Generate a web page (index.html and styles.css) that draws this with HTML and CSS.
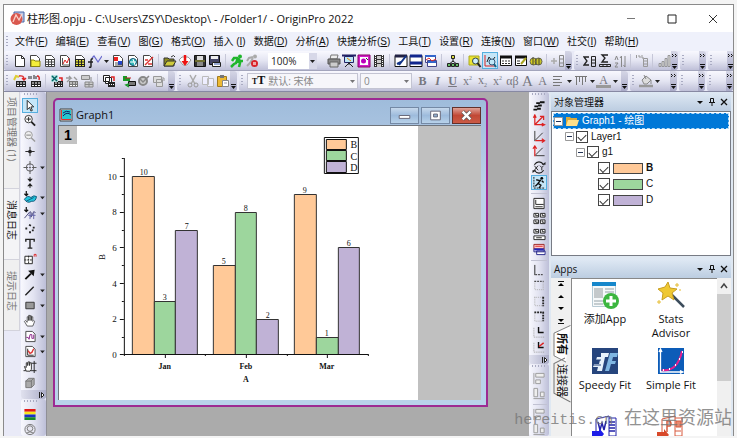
FILE: index.html
```html
<!DOCTYPE html>
<html lang="zh-CN">
<head>
<meta charset="utf-8">
<title>OriginPro 2022</title>
<link rel="stylesheet" href="styles.css">
</head>
<body>
<svg class="sprite" aria-hidden="true">
  <symbol id="doc" viewBox="0 0 14 14"><path d="M2.5 1.5h6l3 3v8h-9z" fill="#fff" stroke="#333"/><path d="M8.5 1.5v3h3" fill="none" stroke="#333"/></symbol>
  <symbol id="folder-doc" viewBox="0 0 14 14"><path d="M2.5 1.5h6l3 3v8h-9z" fill="#fff" stroke="#444"/><path d="M3 6h3l1 1h5v5.500H3z" fill="#f4ee3a" stroke="#8a8410"/></symbol>
  <symbol id="book" viewBox="0 0 14 14"><path d="M2.500 1.500h6l3 3v8h-9z" fill="#fff" stroke="#444"/><path d="M2 5.500h10M2 8h10M2 10.500h10M5.500 5v8M8.500 5v8" stroke="#444"/></symbol>
  <symbol id="graph-doc" viewBox="0 0 14 14"><path d="M2.500 1.500h6l3 3v8h-9z" fill="#fff" stroke="#444"/><path d="M4.500 4v7H11" fill="none" stroke="#555"/><path d="M5 10l2-4 2 3 2-5" fill="none" stroke="#d22"/></symbol>
  <symbol id="matrix" viewBox="0 0 14 14"><path d="M2.500 1.500h6l3 3v8h-9z" fill="#fff" stroke="#444"/><path d="M2 5h10v8H2z" fill="#e5df3c"/><path d="M2 5.500h10M2 8h10M2 10.500h10M2 12.500h10M2.500 5v8M5.500 5v8M8.500 5v8M11.500 5v8" stroke="#222"/></symbol>
  <symbol id="function" viewBox="0 0 14 14"><path d="M5 5Q3 4 3 7v5Q3 14 1 13M0 8h5" fill="none" stroke="#222" stroke-width="1.500"/><path d="M4 4l2-2 4 6 4-6" fill="none" stroke="#66c" stroke-width="1.200"/></symbol>
  <symbol id="layout" viewBox="0 0 14 14"><path d="M2.500 1.500h6l3 3v8h-9z" fill="#fff" stroke="#444"/><path d="M3 3h4v4H3z" fill="#e22"/><path d="M7 7h4v4H7z" fill="#24c"/><path d="M4 9h3M4 11h7" stroke="#555"/></symbol>
  <symbol id="notes" viewBox="0 0 14 14"><path d="M2.500 1.500h6l3 3v8h-9z" fill="#fff" stroke="#444"/><circle cx="7" cy="8" r="3.500" fill="#3bb" stroke="#157"/><path d="M4 8h6M7 5l2 6" stroke="#fff"/></symbol>
  <symbol id="digitize" viewBox="0 0 14 14"><path d="M2.500 1.500h6l3 3v8h-9z" fill="#fff" stroke="#444"/><path d="M4 11l8-8M4 6h3M7 10h4" stroke="#d33" stroke-width="1.400"/></symbol>
  <symbol id="open" viewBox="0 0 14 14"><path d="M1 4h4l1 1h5v7H1z" fill="#8c8a22" stroke="#333"/><path d="M1 12l3-5h9l-3 5z" fill="#cdc93c" stroke="#333"/><path d="M8 3q3-3 4 0" fill="none" stroke="#333"/></symbol>
  <symbol id="template" viewBox="0 0 14 14"><path d="M1 6l3-3h6l3 3-4 5H5z" fill="#fff" stroke="#999"/><path d="M7 1v7" stroke="#e11" stroke-width="2.500"/><path d="M3.500 7h7L7 12z" fill="#e11"/></symbol>
  <symbol id="save" viewBox="0 0 14 14"><path d="M1.500 1.500h11v11h-11z" fill="#333" stroke="#111"/><path d="M4 2h6v4H4z" fill="#ddd"/><path d="M4 8h6v4H4z" fill="#888"/><path d="M2 7h10" stroke="#aa3"/></symbol>
  <symbol id="save-as" viewBox="0 0 14 14"><path d="M1.500 1.500h10v9h-10z" fill="#446" stroke="#111"/><path d="M3 2h7v3H3z" fill="#eee"/><path d="M4.500 8.500h8v4h-8z" fill="#fff" stroke="#222"/><path d="M6 10h6" stroke="#35a"/></symbol>
  <symbol id="run" viewBox="0 0 14 14"><path d="M8 4L4 4 2 7M8 4l-2 5-2 1-3 3M7 7l3 2-1 4M8 4l2 3h3" fill="none" stroke="#1fb62b" stroke-width="2.500"/><circle cx="10" cy="2.500" r="2" fill="#1fb62b"/></symbol>
  <symbol id="run-stop" viewBox="0 0 14 14"><path d="M8 3L4 4 2 7M8 4l-3 5-3 3" fill="none" stroke="#aaa" stroke-width="2"/><circle cx="10" cy="2.500" r="2" fill="#aaa"/><circle cx="9.500" cy="9.500" r="3.500" fill="#d8232a"/><path d="M8 8h3v3H8z" fill="#fff" opacity=".6"/></symbol>
  <symbol id="printer" viewBox="0 0 14 14"><path d="M4 1h7l-1 4H3z" fill="#eee" stroke="#777"/><path d="M1 5h12v5H1z" fill="#888" stroke="#555"/><path d="M3 8h8v5H3z" fill="#ccc" stroke="#666"/></symbol>
  <symbol id="slide" viewBox="0 0 14 14"><path d="M0 1.500h14" stroke="#226" stroke-width="2"/><path d="M2.500 2.500h9v6h-9z" fill="#bce6f4" stroke="#226"/><path d="M7 8v3M7 9l-4 4M7 9l4 4" stroke="#222"/><path d="M5 4l4 3" stroke="#e80"/></symbol>
  <symbol id="camera" viewBox="0 0 14 14"><path d="M1 1h12v12H1z" fill="#d21cc9" stroke="#806"/><path d="M3 3h8v8H3z" fill="#fff"/><circle cx="6.500" cy="7" r="2.500" fill="#b0b"/><path d="M9 4l2 2" stroke="#333"/></symbol>
  <symbol id="film" viewBox="0 0 14 14"><path d="M2 1h10v12H2z" fill="#333"/><path d="M5 2h4v3H5zM5 6h4v3H5zM5 10h4v3H5z" fill="#ccc"/><path d="M3.500 1v12M10.500 1v12" stroke="#fff" stroke-dasharray="1 1"/></symbol>
  <symbol id="edit-window" viewBox="0 0 14 14"><path d="M1 1.500h12v11H1z" fill="#fff" stroke="#111"/><path d="M1 2h12" stroke="#224" stroke-width="3"/><path d="M12 2L5 11M3 10l4-2" stroke="#138" stroke-width="2"/></symbol>
  <symbol id="bars-window" viewBox="0 0 14 14"><path d="M1 1.500h12v11H1z" fill="#fff" stroke="#111"/><path d="M1 2h12M1 9h12" stroke="#11268e" stroke-width="3"/></symbol>
  <symbol id="stack-window" viewBox="0 0 14 14"><path d="M1.500 1.500h10v7h-10zM3.500 6.500h9v6h-9z" fill="#fff" stroke="#448"/><path d="M1 2h11M4 8h8" stroke="#36c" stroke-width="2"/><path d="M2 6l3-2 3 3 4-2" fill="none" stroke="#d33"/></symbol>
  <symbol id="tree" viewBox="0 0 14 14"><path d="M7 3v5M7 7L2 11M7 7l5 4" stroke="#222"/><path d="M5.500 1.500h3v3h-3z" fill="#dd4" stroke="#222"/><path d="M1.500 9.500h3v3h-3zM5.500 9.500h3v3h-3zM9.500 9.500h3v3h-3z" fill="#6b6" stroke="#222"/></symbol>
  <symbol id="explorer" viewBox="0 0 14 14"><path d="M1 2h10v9H1z" fill="#ebe332" stroke="#aa2"/><circle cx="7.500" cy="7" r="3" fill="#cef" stroke="#344"/><path d="M9.500 9l3 4" stroke="#222" stroke-width="2"/></symbol>
  <symbol id="peek" viewBox="0 0 14 14"><path d="M2 1v11h11" fill="none" stroke="#d22"/><path d="M4 8l2-5 3 4 3-4" fill="none" stroke="#222"/><circle cx="9" cy="8" r="3" fill="#bee8f8" stroke="#357"/><path d="M11 10l2 3" stroke="#168" stroke-width="2"/></symbol>
  <symbol id="table" viewBox="0 0 14 14"><path d="M1.500 2.500h11v9h-11z" fill="#fff" stroke="#111"/><path d="M1 3h12" stroke="#111" stroke-width="3"/><path d="M3 7h8M3 9.500h8" stroke="#333" stroke-dasharray="2 1"/></symbol>
  <symbol id="table-edit" viewBox="0 0 14 14"><path d="M1.500 2.500h11v9h-11z" fill="#fff" stroke="#111"/><path d="M1 3h12" stroke="#111" stroke-width="3"/><path d="M3 7h3M3 9.500h3" stroke="#333"/><path d="M12 4L7 10" stroke="#aaa520" stroke-width="2"/></symbol>
  <symbol id="globes" viewBox="0 0 14 14"><circle cx="4.500" cy="7.500" r="3.500" fill="#d8d020" stroke="#665"/><circle cx="9.500" cy="7.500" r="3.500" fill="#c6c227" stroke="#665"/><path d="M4 3v8M7 5v6M10 4v7" stroke="#443"/></symbol>
  <symbol id="add-col" viewBox="0 0 14 14"><path d="M0 7h6M3 4v6" stroke="#aaa" stroke-width="1.500"/><path d="M8.500 1.500h4v11h-4zM8 5h5M8 9h5" fill="none" stroke="#888"/></symbol>
  <symbol id="sum-col" viewBox="0 0 14 14"><path d="M6 3H1l3 4-3 4h5" fill="none" stroke="#222" stroke-width="1.300"/><path d="M8.500 2.500h4v10h-4zM8 6h5M8 9h5" fill="none" stroke="#222"/></symbol>
  <symbol id="sum-row" viewBox="0 0 14 14"><path d="M10 1H4l3 3-3 4h6" fill="none" stroke="#222" stroke-width="1.300"/><path d="M1.500 10.500h11v2h-11zM5 10v3M9 10v3" fill="none" stroke="#222"/></symbol>
  <symbol id="sort" viewBox="0 0 14 14"><path d="M2 6l1.500-4L5 6M2 9h3l-3 4h3M8.500 13V2M7 4l1.500-2M12 2v11M10.500 11L12 13" fill="none" stroke="#888"/></symbol>
  <symbol id="digits" viewBox="0 0 14 14"><path d="M1.500 1v3M3 2h2v2M7 1v3h2" fill="none" stroke="#999"/><path d="M8.500 4.500h4v8h-4zM8 7h5M8 10h5" fill="none" stroke="#999"/></symbol>
  <symbol id="columns" viewBox="0 0 14 14"><path d="M2 9.500h2v3H2zM5 7.500h2v5H5zM8 4.500h2v8H8zM11 1.500h2v11h-2z" fill="#ddd" stroke="#888" stroke-width=".8"/></symbol>
  <symbol id="import" viewBox="0 0 14 14"><path d="M3 7h10v6H3z" fill="#222"/><path d="M4 9h8M4 11.500h8" stroke="#fff" stroke-dasharray="2 1"/><path d="M1 6l2-4 3 1" fill="none" stroke="#dc3" stroke-width="2"/><path d="M6 2q5-1 5 3M9 4l2 2 2-2" fill="none" stroke="#d22" stroke-width="1.300"/></symbol>
  <symbol id="import-many" viewBox="0 0 14 14"><path d="M3 7h10v6H3z" fill="#222"/><path d="M4 9h8M4 11.500h8" stroke="#fff" stroke-dasharray="2 1"/><path d="M1 2v3M3 2v3M6 1v4M8 2v3" stroke="#222"/><path d="M9 2q3 0 2 4" fill="none" stroke="#d22" stroke-width="1.500"/></symbol>
  <symbol id="excel-import" viewBox="0 0 14 14"><path d="M4 7h9v6H4z" fill="#222"/><path d="M5 9h7M5 11.500h7" stroke="#fff" stroke-dasharray="2 1"/><path d="M1 1h7v7H1z" fill="#b7e0e0"/><path d="M2 2l5 5M7 2L2 7" stroke="#066" stroke-width="1.500"/><path d="M9 4h3v3" fill="none" stroke="#d22" stroke-width="1.500"/></symbol>
  <symbol id="reimport" viewBox="0 0 14 14"><path d="M4 7h9v6H4z" fill="#777"/><path d="M5 9h7M5 11.500h7" stroke="#fff" stroke-dasharray="2 1"/><path d="M1 4h5l-2-2M9 3l3 3M6 4l-4 4" fill="none" stroke="#999" stroke-width="1.300"/></symbol>
  <symbol id="link-table" viewBox="0 0 14 14"><path d="M1.500 1.500h8v4h-8zM5 8h8v5H5z" fill="#ccc" stroke="#888"/><path d="M5 10.500h8M9 8v5M11 3v4" stroke="#888"/></symbol>
  <symbol id="duplicate" viewBox="0 0 14 14"><path d="M1.500 1.500h6v6h-6zM3.500 3.500h6v6h-6z" fill="#fff" stroke="#222"/><path d="M6 8h7v5H6z" fill="#222"/><path d="M7 10.500h6" stroke="#fff" stroke-dasharray="1 1"/><path d="M9 3h3v4" fill="none" stroke="#d22" stroke-width="1.500"/></symbol>
  <symbol id="connect" viewBox="0 0 14 14"><path d="M1 2h4v2h3v3H1z" fill="#179c27"/><path d="M6.500 7.500h7v4h-7z" fill="#777" stroke="#111"/><path d="M7 10l-3 1 3 2" fill="none" stroke="#179c27" stroke-width="1.500"/><path d="M3 4h6" stroke="#b22"/></symbol>
  <symbol id="filter-off" viewBox="0 0 14 14"><circle cx="6" cy="7" r="4" fill="#ccc" stroke="#888" stroke-width="2"/><path d="M3 5l3 3 6-6" fill="none" stroke="#888" stroke-width="1.500"/></symbol>
  <symbol id="pages-off" viewBox="0 0 14 14"><path d="M1.500 2.500h8v6h-8zM4.500 5.500h6v7h-6z" fill="#ddd" stroke="#999"/><path d="M9 4h3v3" fill="none" stroke="#999"/></symbol>
  <symbol id="cut" viewBox="0 0 14 14"><path d="M4 1l5 9M10 1L5 10" stroke="#aaa" stroke-width="1.500"/><circle cx="4" cy="11" r="2" fill="none" stroke="#999"/><circle cx="10" cy="11" r="2" fill="none" stroke="#999"/></symbol>
  <symbol id="copy" viewBox="0 0 14 14"><path d="M1.500 2.500h6v8h-6zM6.500 4.500h6v8h-6z" fill="#eef" stroke="#bbb"/></symbol>
  <symbol id="paste" viewBox="0 0 14 14"><path d="M1.500 2.500h9v10h-9z" fill="#edb932" stroke="#a07a20"/><path d="M4 1h4v3H4z" fill="#777"/><path d="M6.500 6.500h6v6h-6z" fill="#fff" stroke="#888"/><path d="M8 9h3" stroke="#999"/></symbol>
  <symbol id="lines" viewBox="0 0 14 14"><path d="M2 2.500h9M2 5.500h7M2 8.500h9M2 11.500h7" stroke="#777"/></symbol>
  <symbol id="verticals" viewBox="0 0 14 14"><path d="M2.500 2v9M5.500 2v6M8.500 2v9M11.500 2v6M1 2.500h12" stroke="#777"/></symbol>
  <symbol id="bucket" viewBox="0 0 14 14"><path d="M3 6l4-4 5 4-4 4H5z" fill="#ddd" stroke="#888"/><path d="M5 1l2 4M12 6v4" stroke="#888"/><path d="M0 12h14" stroke="#999" stroke-width="2.500"/></symbol>
  <symbol id="drop" viewBox="0 0 8 14"><path d="M2 6h5L4.500 9z" fill="#222"/></symbol>
  <symbol id="more" viewBox="0 0 7 18"><path d="M1 12.500h5" stroke="#111"/><path d="M1 14h5l-2.500 3z" fill="#111"/></symbol>
  <symbol id="more-double" viewBox="0 0 7 18"><path d="M1 2l1.500 1.500L1 5M4 2l1.500 1.500L4 5" fill="none" stroke="#111"/><path d="M1 12.500h5" stroke="#111"/><path d="M1 14h5l-2.500 3z" fill="#111"/></symbol>
  <symbol id="pointer" viewBox="0 0 14 14"><path d="M4 1.500v10l2.500-2.500 1.500 4 1.500-.7L8 8.500h3z" fill="#fff" stroke="#222"/></symbol>
  <symbol id="zoom-in" viewBox="0 0 14 14"><circle cx="5.500" cy="5.500" r="4" fill="#fff" stroke="#333"/><path d="M3 5.500h5M5.500 3v5" stroke="#222"/><path d="M8.500 8.500l4 4" stroke="#222" stroke-width="2"/></symbol>
  <symbol id="zoom-out" viewBox="0 0 14 14"><circle cx="5.500" cy="5.500" r="4" fill="#eee" stroke="#999"/><path d="M3 5.500h5M8.500 8.500l4 4" stroke="#999" stroke-width="1.500"/></symbol>
  <symbol id="cross" viewBox="0 0 14 14"><path d="M7 2v10M2 7h10" stroke="#222"/><circle cx="7" cy="7" r="2" fill="#222"/></symbol>
  <symbol id="target" viewBox="0 0 14 14"><circle cx="7" cy="7" r="4" fill="#eef" stroke="#555"/><path d="M7 0v5M7 9v5M0 7h5M9 7h5" stroke="#555"/><circle cx="7" cy="7" r="1" fill="#555"/></symbol>
  <symbol id="updown" viewBox="0 0 14 14"><path d="M7 1v4M7 9v4" stroke="#222"/><path d="M4 3h6L7 6.500zM4 11h6L7 7.500z" fill="#222"/></symbol>
  <symbol id="mask" viewBox="0 0 14 14"><path d="M3 0v5M1 3l2 2 2-2" fill="none" stroke="#111" stroke-width="1.300"/><path d="M1 9q3-5 7-2 3-3 6-1-1 6-5 5-5 3-8-2z" fill="#23c4dd" stroke="#157"/><path d="M3 11l8-4" stroke="#157"/></symbol>
  <symbol id="region" viewBox="0 0 14 14"><path d="M3 0v5M1 3l2 2 2-2" fill="none" stroke="#111" stroke-width="1.300"/><path d="M1 12l6-7q2 0 1 6l3-6 2 1" fill="none" stroke="#447"/><path d="M7 6v7M11 6v7M5 9h8" stroke="#66a"/></symbol>
  <symbol id="points" viewBox="0 0 14 14"><path d="M2 7h2M6 3l2 1M6 11h2M10 6h2M9 9h2" stroke="#222" stroke-width="2"/></symbol>
  <symbol id="text-tool" viewBox="0 0 14 14"><path d="M2 2.500h10M7 2v10M2.500 2v3M11.500 2v3M4.500 12h5" stroke="#222" stroke-width="1.500"/></symbol>
  <symbol id="grid-tool" viewBox="0 0 14 14"><path d="M1.500 3.500h8v8h-8z" fill="#fff" stroke="#222"/><path d="M1 7.500h9M5.500 3v9" stroke="#222" stroke-dasharray="2 1"/><path d="M11.500 4V1.500h2V4" fill="none" stroke="#d22"/></symbol>
  <symbol id="arrow-tool" viewBox="0 0 14 14"><path d="M2 12l6-6" stroke="#111" stroke-width="2"/><path d="M5 3l7-1-1 7z" fill="#111"/></symbol>
  <symbol id="line-tool" viewBox="0 0 14 14"><path d="M2 12L11 3" stroke="#222" stroke-width="1.500"/></symbol>
  <symbol id="rect-tool" viewBox="0 0 14 14"><path d="M2.500 3.500h9v7h-9z" fill="#999" stroke="#333"/></symbol>
  <symbol id="hand" viewBox="0 0 14 14"><path d="M4 13L1 8l1-1 2 2V3h1.500v4V1.500H7V7V2h1.500v5V3H10v5l1-1 1 1-2 5z" fill="#fff" stroke="#333" stroke-width=".8"/></symbol>
  <symbol id="plot-purple" viewBox="0 0 14 14"><path d="M2.500 1.500h7l3 3v8h-10z" fill="#fff" stroke="#444"/><path d="M3 8h2l1 2 1-5h2v4h2V5" fill="none" stroke="#828"/></symbol>
  <symbol id="plot-red" viewBox="0 0 14 14"><path d="M2.500 1.500h7l3 3v8h-10z" fill="#fff" stroke="#444"/><path d="M4.500 4v7H11" stroke="#222" fill="none"/><path d="M5 6l2 3 2-1 2-4" fill="none" stroke="#d33" stroke-width="1.500"/></symbol>
  <symbol id="rescale" viewBox="0 0 14 14"><path d="M0 11.500h14M11.500 1v13M9 3.500h5" stroke="#222"/><path d="M3 12L1 7l2 1V3h1.500v3L5 2h1.500v4L7 3h1.500v7L7 12z" fill="#fff" stroke="#333"/></symbol>
  <symbol id="cube" viewBox="0 0 14 14"><path d="M2.500 5.500l3-3h6v7l-3 3h-6z" fill="#aaa" stroke="#777"/><path d="M2 5.500h6.500v7M8 5.500l3-3" fill="none" stroke="#777"/></symbol>
  <symbol id="palette" viewBox="0 0 14 14"><path d="M1 2.500h12" stroke="#e01818" stroke-width="3"/><path d="M1 5.500h12" stroke="#f6e71c" stroke-width="3"/><path d="M1 8.500h12" stroke="#1b32c4" stroke-width="3"/><path d="M1 11.500h12" stroke="#168a27" stroke-width="3"/></symbol>
  <symbol id="contour" viewBox="0 0 14 14"><circle cx="7" cy="7" r="5.500" fill="#e6e6f0" stroke="#777"/><circle cx="7" cy="6" r="3" fill="none" stroke="#777"/><path d="M3 11q4-3 8 0" fill="none" stroke="#777"/></symbol>
  <symbol id="steps" viewBox="0 0 14 14"><path d="M1 11.500h4M5 10.500h4M2 8h4M6 7h4M4 4.500h4M8 3.500h5" stroke="#111" stroke-width="2"/></symbol>
  <symbol id="axes-all" viewBox="0 0 14 14"><path d="M2.500 12V2M2 11.500h10M3 11L11 3M1 4l1.500-3L4 4M10 10l3 1.500L10 13M8 2.500h4v4" fill="none" stroke="#d22" stroke-width="1.300"/></symbol>
  <symbol id="axes-x" viewBox="0 0 14 14"><path d="M2.500 1v11M3 11l8-8" fill="none" stroke="#333"/><path d="M3 11.500h10M10 9.500l3 2-3 2" fill="none" stroke="#d22" stroke-width="1.300"/></symbol>
  <symbol id="axes-y" viewBox="0 0 14 14"><path d="M3 11.500h10M3 11l8-8" fill="none" stroke="#333"/><path d="M2.500 12V2M.5 4l2-3 2 3" fill="none" stroke="#d22" stroke-width="1.300"/></symbol>
  <symbol id="swap-xy" viewBox="0 0 14 14"><path d="M2 4q2-3 5-3t5 3M12 10q-2 3-5 3T2 10" fill="none" stroke="#222" stroke-width="1.300"/><path d="M2 5l4 5M6 5l-4 5M8 5l2 2 2-2M10 7v3" fill="none" stroke="#222"/><path d="M10 4h4V1zM0 10h4l-4 3z" fill="#222"/></symbol>
  <symbol id="speed-mode" viewBox="0 0 14 14"><path d="M1.500 1v12H13" fill="none" stroke="#111" stroke-dasharray="2 1"/><circle cx="10" cy="2.500" r="1.500"/><path d="M9 4L6 8l3 2-2 3M8 5L4 4M10 5l2 2M6 8L3 11" fill="none" stroke="#111" stroke-width="1.500"/></symbol>
  <symbol id="panel-one" viewBox="0 0 14 14"><path d="M1.500 1.500h11v11h-11z" fill="#fff" stroke="#222"/><path d="M3.500 3v5H12M3 10.500h8" fill="none" stroke="#222"/></symbol>
  <symbol id="panel-four" viewBox="0 0 14 14"><path d="M1.500 1.500h5v4h-5zM8.500 1.500h5v4h-5zM1.500 8.500h5v4h-5zM8.500 8.500h5v4h-5z" fill="#fff" stroke="#222"/><path d="M3.500 2v2H6M10.500 2v2H13M3.500 9v2H6M10.500 9v2H13" fill="none" stroke="#222"/></symbol>
  <symbol id="panel-three" viewBox="0 0 14 14"><path d="M1.500 1.500h5v4h-5zM8.500 1.500h5v4h-5zM1.500 8.500h12v4h-12z" fill="#fff" stroke="#222"/><path d="M3.500 2v2H6M10.500 2v2H13M4 10.500h6" fill="none" stroke="#222"/></symbol>
  <symbol id="merge" viewBox="0 0 14 14"><path d="M1.500 1.500h11v5h-11z" fill="#fcc" stroke="#922"/><path d="M3 3.500h8" stroke="#d22"/><path d="M1.500 6.500h11v3h-11zM4.500 8.500h9v4h-9z" fill="#fff" stroke="#228"/><path d="M2 7h10" stroke="#22b" stroke-width="2"/></symbol>
  <symbol id="axis-bl" viewBox="0 0 14 14"><path d="M2.500 1v11" stroke="#222"/><path d="M3 11.500h9" stroke="#222" stroke-dasharray="2 1"/></symbol>
  <symbol id="axis-tl" viewBox="0 0 14 14"><path d="M2.500 2v10M11.500 3v9M3 11.500h8" stroke="#aaa" stroke-dasharray="1 1"/><path d="M2 2.500h10" stroke="#222" stroke-dasharray="2 1"/></symbol>
  <symbol id="axis-r" viewBox="0 0 14 14"><path d="M2.500 2v10M2 2.500h9M3 11.500h8" stroke="#aaa" stroke-dasharray="1 1"/><path d="M11.500 2v10" stroke="#222" stroke-dasharray="2 1" stroke-width="2"/></symbol>
  <symbol id="axis-box" viewBox="0 0 14 14"><path d="M2 2.500h10M11.500 2v10" stroke="#222" stroke-width="2" stroke-dasharray="2 1"/><path d="M2.500 3v9h9" fill="none" stroke="#aaa" stroke-dasharray="1 1"/></symbol>
  <symbol id="inset" viewBox="0 0 14 14"><path d="M1.500 2v10h11" fill="none" stroke="#999" stroke-dasharray="1 1"/><path d="M6.500 1v6H12" fill="none" stroke="#111" stroke-width="1.500"/></symbol>
  <symbol id="inset-data" viewBox="0 0 14 14"><path d="M1.500 2v10h11" fill="none" stroke="#999" stroke-dasharray="1 1"/><path d="M6.500 1v6H12" fill="none" stroke="#111" stroke-width="1.500"/><path d="M7 6l5-4" stroke="#d22" stroke-width="1.500"/></symbol>
  <symbol id="align" viewBox="0 0 14 14"><path d="M1.500 1v12" stroke="#999"/><path d="M3.500 1.500h9v4h-9zM3.500 8.500h5v4h-5z" fill="#eee" stroke="#999"/></symbol>
  <symbol id="align-bottom" viewBox="0 0 14 14"><path d="M1 12.500h12" stroke="#999"/><path d="M1.500 1.500h4v9h-4zM8.500 5.500h4v5h-4z" fill="#eee" stroke="#999"/></symbol>
  <symbol id="more-side" viewBox="0 0 8 8"><path d="M1.500 1v6" stroke="#222"/><path d="M3.500 1.500v5L6 4z" fill="#fff" stroke="#222"/></symbol>
  <symbol id="menu-arrow" viewBox="0 0 10 10"><path d="M2 4h6L5 7z" fill="#111"/></symbol>
  <symbol id="pin" viewBox="0 0 10 10"><path d="M3.500 1.500h3v4h-3zM2 5.500h6M5 6v3" fill="none" stroke="#111"/></symbol>
  <symbol id="close" viewBox="0 0 10 10"><path d="M2 2l6 6M8 2L2 8" stroke="#111" stroke-width="1.300"/></symbol>
  <symbol id="minus-box" viewBox="0 0 9 9"><path d="M.5 .5h8v8h-8z" fill="#fff" stroke="#999"/><path d="M2 4.500h5" stroke="#235"/></symbol>
</svg>

<main class="window">
  <header class="titlebar">
    <svg class="app-icon" viewBox="0 0 15 15" aria-hidden="true"><path d="M4 1h10v10H4z" fill="#b9c9e8" stroke="#4b67a6"/><circle cx="6.500" cy="8" r="6" fill="#d9584e"/><path d="M3 11l3-7 3 5 3-6" fill="none" stroke="#fbd0c8" stroke-width="1.300"/></svg>
    <h1 class="title">柱形图.opju - C:\Users\ZSY\Desktop\ - /Folder1/ - OriginPro 2022</h1>
    <div class="captions">
      <button aria-label="最小化"><svg viewBox="0 0 12 12"><path d="M2 5.500h8" stroke="#777"/></svg></button>
      <button aria-label="最大化"><svg viewBox="0 0 12 12"><path d="M2 2h8v8H2z" fill="none" stroke="#222"/></svg></button>
      <button aria-label="关闭"><svg viewBox="0 0 12 12"><path d="M2 2l8 8M10 2l-8 8" stroke="#333"/></svg></button>
    </div>
  </header>

  <nav class="menubar">
    <span class="grip"></span>
    <button>文件(<u>F</u>)</button><button>编辑(<u>E</u>)</button><button>查看(<u>V</u>)</button><button>图(<u>G</u>)</button><button>格式(<u>O</u>)</button><button>插入 (<u>I</u>)</button><button>数据(<u>D</u>)</button><button>分析(<u>A</u>)</button><button>快捷分析(<u>S</u>)</button><button>工具(<u>T</u>)</button><button>设置(<u>R</u>)</button><button>连接(<u>N</u>)</button><button>窗口(<u>W</u>)</button><button>社交(<u>I</u>)</button><button>帮助(<u>H</u>)</button>
  </nav>

  <div class="toolrow">
    <div class="strip strip-main">
      <span class="grip"></span>
      <button aria-label="新建项目"><svg><use href="#doc"/></svg></button><button aria-label="新建文件夹"><svg><use href="#folder-doc"/></svg></button><button aria-label="新建工作簿"><svg><use href="#book"/></svg></button><button aria-label="新建图"><svg><use href="#graph-doc"/></svg></button><button aria-label="新建矩阵"><svg><use href="#matrix"/></svg></button><button aria-label="新建函数图"><svg><use href="#function"/></svg></button><button class="drop" aria-label="函数图选项"><svg><use href="#drop"/></svg></button><button aria-label="新建布局"><svg><use href="#layout"/></svg></button><button aria-label="新建备注"><svg><use href="#notes"/></svg></button><button aria-label="数字化"><svg><use href="#digitize"/></svg></button>
      <i class="sep"></i>
      <button aria-label="打开"><svg><use href="#open"/></svg></button><button aria-label="打开模板"><svg><use href="#template"/></svg></button><button aria-label="保存"><svg><use href="#save"/></svg></button><button aria-label="保存模板"><svg><use href="#save-as"/></svg></button>
      <i class="sep"></i>
      <button aria-label="重新计算"><svg><use href="#run"/></svg></button><button aria-label="停止"><svg><use href="#run-stop"/></svg></button>
      <label class="combo zoom"><select aria-label="缩放"><option>100%</option></select><svg class="combo-arrow"><use href="#drop"/></svg></label>
      <button aria-label="打印"><svg><use href="#printer"/></svg></button><button aria-label="放映"><svg><use href="#slide"/></svg></button><button aria-label="截图"><svg><use href="#camera"/></svg></button><button aria-label="视频"><svg><use href="#film"/></svg></button>
      <i class="sep"></i>
      <button aria-label="编辑窗口"><svg><use href="#edit-window"/></svg></button><button aria-label="平铺"><svg><use href="#bars-window"/></svg></button><button aria-label="层叠"><svg><use href="#stack-window"/></svg></button>
      <i class="sep"></i>
      <button aria-label="结构"><svg><use href="#tree"/></svg></button>
      <i class="sep"></i>
      <button aria-label="项目管理器"><svg><use href="#explorer"/></svg></button><button class="on" aria-label="对象管理器"><svg><use href="#peek"/></svg></button><button aria-label="结果日志"><svg><use href="#table"/></svg></button><button aria-label="命令窗口"><svg><use href="#table-edit"/></svg></button><button aria-label="学习中心"><svg><use href="#globes"/></svg></button>
      <i class="sep"></i>
      <button aria-label="添加列"><svg><use href="#add-col"/></svg></button>
      <button class="overflow" aria-label="更多"><svg><use href="#more"/></svg></button>
    </div>
    <div class="strip strip-fill">
      <span class="grip"></span>
      <button aria-label="列统计"><svg><use href="#sum-col"/></svg></button><button aria-label="行统计"><svg><use href="#sum-row"/></svg></button><button aria-label="排序"><svg><use href="#sort"/></svg></button>
      <i class="sep"></i><button aria-label="设置值"><svg><use href="#digits"/></svg></button>
      <i class="sep"></i><button aria-label="柱状图"><svg><use href="#columns"/></svg></button>
      <button class="overflow" aria-label="更多"><svg><use href="#more-double"/></svg></button>
    </div>
    <div class="strip strip-mini"><span class="grip"></span><button class="overflow" aria-label="更多"><svg><use href="#more-double"/></svg></button></div>
    <div class="strip strip-mini"><span class="grip"></span><button class="overflow" aria-label="更多"><svg><use href="#more-double"/></svg></button></div>
  </div>

  <div class="toolrow">
    <div class="strip strip-import">
      <span class="grip"></span>
      <button aria-label="导入向导"><svg><use href="#import"/></svg></button><button aria-label="导入多个文件"><svg><use href="#import-many"/></svg></button>
      <i class="sep"></i>
      <button aria-label="导入表格"><svg><use href="#excel-import"/></svg></button><button aria-label="重新导入"><svg><use href="#reimport"/></svg></button><button aria-label="链接表格"><svg><use href="#link-table"/></svg></button>
      <i class="sep"></i>
      <button aria-label="批处理"><svg><use href="#duplicate"/></svg></button>
      <i class="sep blank"></i>
      <button aria-label="连接数据"><svg><use href="#connect"/></svg></button><button aria-label="筛选"><svg><use href="#filter-off"/></svg></button><button aria-label="复制页"><svg><use href="#pages-off"/></svg></button>
      <button class="overflow" aria-label="更多"><svg><use href="#more"/></svg></button>
    </div>
    <div class="strip strip-clip">
      <span class="grip"></span>
      <button aria-label="剪切"><svg><use href="#cut"/></svg></button><button aria-label="复制"><svg><use href="#copy"/></svg></button><button aria-label="粘贴"><svg><use href="#paste"/></svg></button>
      <button class="overflow" aria-label="更多"><svg><use href="#more"/></svg></button>
    </div>
    <div class="strip strip-font">
      <span class="grip"></span>
      <label class="combo font"><b class="tt">T<b>T</b></b><select aria-label="字体"><option>默认: 宋体</option></select><svg class="combo-arrow"><use href="#drop"/></svg></label>
      <label class="combo size"><select aria-label="字号"><option>0</option></select><svg class="combo-arrow"><use href="#drop"/></svg></label>
      <button class="glyph bold">B</button><button class="glyph italic">I</button><button class="glyph under">U</button><button class="glyph">x<sup>2</sup></button><button class="glyph">x<sub>2</sub></button><button class="glyph">x<sup>2</sup></button><button class="glyph">αβ</button><button class="glyph big">A</button><button class="glyph">A</button><button aria-label="对齐"><svg><use href="#lines"/></svg></button><button class="drop" aria-label="对齐选项"><svg><use href="#drop"/></svg></button><button aria-label="间距"><svg><use href="#verticals"/></svg></button><button class="drop" aria-label="间距选项"><svg><use href="#drop"/></svg></button><button class="glyph colour">A</button><button class="drop" aria-label="颜色选项"><svg><use href="#drop"/></svg></button>
      <button class="overflow" aria-label="更多"><svg><use href="#more"/></svg></button>
    </div>
    <div class="strip strip-fill">
      <span class="grip"></span>
      <button aria-label="填充"><svg><use href="#bucket"/></svg></button><button class="drop" aria-label="填充选项"><svg><use href="#drop"/></svg></button>
      <button class="overflow" aria-label="更多"><svg><use href="#more-double"/></svg></button>
    </div>
    <div class="strip strip-mini"><span class="grip"></span><button class="overflow" aria-label="更多"><svg><use href="#more-double"/></svg></button></div>
    <div class="strip strip-mini"><span class="grip"></span><button class="overflow" aria-label="更多"><svg><use href="#more-double"/></svg></button></div>
  </div>

  <div class="body">
    <nav class="side-tabs">
      <button class="first">项目管理器 (1)</button>
      <button class="active">消息日志</button>
      <button>提示日志</button>
    </nav>

    <div class="rail rail-left">
      <div class="rail-strip">
        <span class="rail-grip"></span>
        <div class="rail-group all">
          <div><button class="on" aria-label="指针"><svg><use href="#pointer"/></svg></button></div>
          <div><button aria-label="放大"><svg><use href="#zoom-in"/></svg></button></div>
          <div><button aria-label="缩小"><svg><use href="#zoom-out"/></svg></button></div>
          <div><button aria-label="屏幕读取"><svg><use href="#cross"/></svg></button></div>
          <div><button aria-label="数据读取"><svg><use href="#target"/></svg></button><button class="drop" aria-label="选项"><svg><use href="#drop"/></svg></button></div>
          <div><button aria-label="数据选择"><svg><use href="#updown"/></svg></button></div>
          <div><button aria-label="屏蔽"><svg><use href="#mask"/></svg></button><button class="drop" aria-label="选项"><svg><use href="#drop"/></svg></button></div>
          <div><button aria-label="区域"><svg><use href="#region"/></svg></button><button class="drop" aria-label="选项"><svg><use href="#drop"/></svg></button></div>
          <div><button aria-label="绘制数据"><svg><use href="#points"/></svg></button></div>
          <div><button aria-label="文本"><svg><use href="#text-tool"/></svg></button></div>
          <div><button aria-label="表格"><svg><use href="#grid-tool"/></svg></button></div>
          <div><button aria-label="箭头"><svg><use href="#arrow-tool"/></svg></button><button class="drop" aria-label="选项"><svg><use href="#drop"/></svg></button></div>
          <div><button aria-label="直线"><svg><use href="#line-tool"/></svg></button><button class="drop" aria-label="选项"><svg><use href="#drop"/></svg></button></div>
          <div><button aria-label="矩形"><svg><use href="#rect-tool"/></svg></button><button class="drop" aria-label="选项"><svg><use href="#drop"/></svg></button></div>
          <div><button aria-label="平移"><svg><use href="#hand"/></svg></button></div>
          <div><button aria-label="插入公式"><svg><use href="#plot-purple"/></svg></button><button class="drop" aria-label="选项"><svg><use href="#drop"/></svg></button></div>
          <div><button aria-label="插入图"><svg><use href="#plot-red"/></svg></button><button class="drop" aria-label="选项"><svg><use href="#drop"/></svg></button></div>
          <div><button aria-label="重新缩放"><svg><use href="#rescale"/></svg></button></div>
          <div><button aria-label="三维旋转"><svg><use href="#cube"/></svg></button></div>
        </div>
        <button class="rail-more" aria-label="更多"><svg><use href="#more-side"/></svg></button>
      </div>
      <div class="rail-strip rest">
        <span class="rail-grip"></span>
        <div class="rail-group two">
          <button aria-label="调色板"><svg><use href="#palette"/></svg></button>
          <button aria-label="等高线"><svg><use href="#contour"/></svg></button>
        </div>
      </div>
    </div>

    <section class="workspace">
      <article class="graph-window">
        <header class="graph-title">
          <svg class="graph-icon" viewBox="0 0 14 14" aria-hidden="true"><path d="M1 1h12v12H1z" fill="#ddd" stroke="#444"/><path d="M3 2h9v9H3z" fill="#27c7cf"/><path d="M2.500 2v9.500H12" fill="none" stroke="#d33"/><path d="M4 8q4-5 8-1M4 5q3-3 7-1" fill="none" stroke="#126"/></svg>
          <h2>Graph1</h2>
          <div class="graph-buttons">
            <button aria-label="最小化"><svg viewBox="0 0 28 15"><path d="M8.500 7.500h11v3h-11z" fill="#fff" stroke="#667"/></svg></button>
            <button aria-label="最大化"><svg viewBox="0 0 28 15"><path d="M9 3h10v9H9z" fill="#fff" stroke="#667"/><path d="M12 6h4v3h-4z" fill="#8fb0d0" stroke="#667"/></svg></button>
            <button class="shut" aria-label="关闭"><svg viewBox="0 0 28 15"><path d="M10 3.500l8 8M18 3.500l-8 8" stroke="#555" stroke-width="4"/><path d="M10 3.500l8 8M18 3.500l-8 8" stroke="#fff" stroke-width="2.500"/></svg></button>
          </div>
        </header>
        <div class="graph-page">
          <button class="layer-tag">1</button>
          <svg class="chart" viewBox="60 126 357 274" role="img" aria-label="柱形图">
            <g class="bars">
              <path class="b" d="M132.500 354.500v-178h22v178zM213.500 354.500v-89h22v89zM294.500 354.500v-160h22v160z"/>
              <path class="c" d="M154.500 354.500v-53h21v53zM235.500 354.500v-142h21v142zM316.500 354.500v-17h22v17z"/>
              <path class="d" d="M175.500 354.500v-124h22v124zM256.500 354.500v-35h22v35zM338.500 354.500v-107h21v107z"/>
            </g>
            <path class="axis" d="M124.500 158v197M124 354.500h245M120 354.500h4M120 319.500h4M120 283.500h4M120 247.500h4M120 212.500h4M120 176.500h4M122 337.500h2M122 301.500h2M122 265.500h2M122 230.500h2M122 194.500h2M122 158.500h2M165.500 355v3M246.500 355v3M327.500 355v3M124.500 355v1M205.500 355v1M287.500 355v1M368.500 355v1"/>
            <g class="ticks"><text x="117" y="358">0</text><text x="117" y="322">2</text><text x="117" y="287">4</text><text x="117" y="251">6</text><text x="117" y="215">8</text><text x="117" y="180">10</text></g>
            <g class="values"><text x="144" y="175">10</text><text x="165" y="300">3</text><text x="187" y="229">7</text><text x="224" y="264">5</text><text x="246" y="211">8</text><text x="268" y="318">2</text><text x="305" y="193">9</text><text x="327" y="336">1</text><text x="349" y="246">6</text></g>
            <g class="names"><text x="165" y="369">Jan</text><text x="246" y="369">Feb</text><text x="327" y="369">Mar</text><text x="246" y="382">A</text></g>
            <text class="ylabel" transform="translate(105 257) rotate(-90)">B</text>
            <path class="legend-box" d="M324.500 137.500h34v36h-34z"/>
            <path class="b key" d="M326.500 139.500h20v10h-20z"/><path class="c key" d="M326.500 150.500h20v10h-20z"/><path class="d key" d="M326.500 161.500h20v11h-20z"/>
            <g class="legend-text"><text x="354" y="148">B</text><text x="354" y="160">C</text><text x="354" y="171">D</text></g>
          </svg>
        </div>
      </article>
    </section>

    <div class="rail rail-right">
      <div class="rail-strip">
        <span class="rail-grip"></span>
        <div class="rail-group six">
          <button aria-label="瀑布图"><svg><use href="#steps"/></svg></button><button aria-label="坐标轴"><svg><use href="#axes-all"/></svg></button><button aria-label="横轴"><svg><use href="#axes-x"/></svg></button><button aria-label="纵轴"><svg><use href="#axes-y"/></svg></button><button aria-label="交换坐标轴"><svg><use href="#swap-xy"/></svg></button><button class="on" aria-label="快速模式"><svg><use href="#speed-mode"/></svg></button>
        </div>
        <i class="rail-sep"></i>
        <div class="rail-group four">
          <button aria-label="单面板"><svg><use href="#panel-one"/></svg></button><button aria-label="四面板"><svg><use href="#panel-four"/></svg></button><button aria-label="三面板"><svg><use href="#panel-three"/></svg></button><button aria-label="合并"><svg><use href="#merge"/></svg></button>
        </div>
        <i class="rail-sep"></i>
        <div class="rail-group six">
          <button aria-label="左下轴"><svg><use href="#axis-bl"/></svg></button><button aria-label="上轴"><svg><use href="#axis-tl"/></svg></button><button aria-label="右轴"><svg><use href="#axis-r"/></svg></button><button aria-label="右上轴"><svg><use href="#axis-box"/></svg></button><button aria-label="插图"><svg><use href="#inset"/></svg></button><button aria-label="插图和数据"><svg><use href="#inset-data"/></svg></button>
        </div>
        <button class="rail-more" aria-label="更多"><svg><use href="#more-side"/></svg></button>
      </div>
      <div class="rail-strip rest">
        <span class="rail-grip"></span>
        <div class="rail-group tail">
          <button aria-label="左对齐"><svg><use href="#align"/></svg></button><button aria-label="底对齐"><svg><use href="#align-bottom"/></svg></button><i class="rail-sep"></i><button aria-label="顶对齐"><svg><use href="#align"/></svg></button><button aria-label="下对齐"><svg><use href="#align-bottom"/></svg></button>
        </div>
      </div>
    </div>

    <aside class="panels">
      <section class="panel objects">
        <header><h2>对象管理器</h2><button aria-label="菜单"><svg><use href="#menu-arrow"/></svg></button><button aria-label="固定"><svg><use href="#pin"/></svg></button><button aria-label="关闭"><svg><use href="#close"/></svg></button></header>
        <ul class="tree">
          <li class="selected"><svg class="toggle"><use href="#minus-box"/></svg><svg class="folder" viewBox="0 0 14 12"><path d="M1 2h4l1 1h6v8H1z" fill="#d9a93c"/><path d="M1 11l2-6h11l-2 6z" fill="#ffe08a"/></svg>Graph1 - 绘图</li>
          <li class="level-1"><svg class="toggle"><use href="#minus-box"/></svg><label><input type="checkbox" checked>Layer1</label></li>
          <li class="level-2"><svg class="toggle"><use href="#minus-box"/></svg><label><input type="checkbox" checked>g1</label></li>
          <li class="leaf"><label><input type="checkbox" checked><i class="swatch orange"></i><b>B</b></label></li>
          <li class="leaf"><label><input type="checkbox" checked><i class="swatch green"></i>C</label></li>
          <li class="leaf"><label><input type="checkbox" checked><i class="swatch purple"></i>D</label></li>
        </ul>
      </section>
      <section class="panel apps">
        <header><h2>Apps</h2><button aria-label="菜单"><svg><use href="#menu-arrow"/></svg></button><button aria-label="固定"><svg><use href="#pin"/></svg></button><button aria-label="关闭"><svg><use href="#close"/></svg></button></header>
        <div class="apps-body">
          <div class="app-tabs">
            <div class="steppers">
              <button aria-label="最前"><svg viewBox="0 0 8 8"><path d="M1 1.500h6" stroke="#111"/><path d="M1 6h6L4 3z"/></svg></button>
              <button aria-label="向前"><svg viewBox="0 0 8 8"><path d="M1 6h6L4 3z"/></svg></button>
              <button aria-label="向后"><svg viewBox="0 0 8 8"><path d="M1 2h6L4 5z"/></svg></button>
              <button aria-label="最后"><svg viewBox="0 0 8 8"><path d="M1 6.500h6" stroke="#111"/><path d="M1 2h6L4 5z"/></svg></button>
            </div>
            <button class="app-tab current"><svg viewBox="0 0 18 42" preserveAspectRatio="none" aria-hidden="true"><path d="M17.500 .5L1 9v25l12 7" fill="#fff" stroke="#777"/></svg><span>所有</span></button>
            <button class="app-tab"><svg viewBox="0 0 18 42" preserveAspectRatio="none" aria-hidden="true"><path d="M12 1L1 6v27l16.500 8" fill="none" stroke="#777"/></svg><span>连接器</span></button>
          </div>
          <div class="app-grid">
            <a href="#add"><svg viewBox="0 0 28 28"><path d="M1.500 1.500h23v24h-23z" fill="#f6f9fa" stroke="#b8cbd4"/><path d="M1 1h24v4H1z" fill="#1687cb"/><path d="M3 7h9v10H3z" fill="#c4c9cb"/><path d="M14 8h9M14 11h9M3 20h9M3 23h9" stroke="#c5cdd0" stroke-width="2"/><circle cx="20" cy="20" r="8" fill="#3cb63f"/><path d="M20 15v10M15 20h10" stroke="#fff" stroke-width="3"/></svg><span>添加App</span></a>
            <a href="#stats"><svg viewBox="0 0 28 28"><path d="M13 12l14 14" stroke="#3c4d5c" stroke-width="2.500"/><path d="M11 1l2 6 7 1-5 4 2 7-6-4-6 4 1-7-5-4 7-2z" fill="#efc832" stroke="#c99f21"/><path d="M20 2v4M18 4h4M2 19v4M0 21h4M23 8v2" stroke="#e6bc30"/></svg><span>Stats Advisor</span></a>
            <a href="#speedy"><svg viewBox="0 0 28 28"><path d="M1 1h26v26H1z" fill="#26457d"/><path d="M10 6h8l-1 4h-3l-3 14H6l1-4H2l1-3h5l1-4H5l1-3h4z" fill="#e8f2fb"/><path d="M19 6h8l-1 4h-4l-1 4h4l-1 3h-4l-2 7h-4z" fill="#7fb6e2"/><path d="M2 13h8M2 18h8M4 9h6" stroke="#26457d"/></svg><span>Speedy Fit</span></a>
            <a href="#simple"><svg viewBox="0 0 28 28"><path d="M1 1h26v26H1z" fill="#0c5cb8"/><path d="M3.500 3v22H25M2 5l1.500-3L5 5M23 23.500l3 1.500-3 1.500" fill="none" stroke="#fff" stroke-width="1.300"/><path d="M5 23q8 1 13-4t7-15" fill="none" stroke="#e32091" stroke-width="2"/><path d="M6 23h1M12 22h1M18 18h1M22 12h1M25 5h1" stroke="#fff" stroke-width="2"/></svg><span>Simple Fit</span></a>
            <a href="#word" aria-label="Word"><svg viewBox="0 0 28 28"><path d="M14 3h11v18H14z" fill="#fff" stroke="#2222a8"/><path d="M18 7h6M18 10h6M18 13h6M18 16h6" stroke="#2222a8" stroke-width="1.500"/><path d="M5 4l13-3v22L5 20z" fill="#fff" stroke="#2222a8"/><path d="M7 7l2 8 2-7 2 7 2-9" fill="none" stroke="#2222a8" stroke-width="1.500"/><path d="M1 16h7v-3l5 6-5 6v-4H1z" fill="#1c1ce8"/></svg></a>
            <a href="#slides" aria-label="PowerPoint"><svg viewBox="0 0 28 28"><path d="M14 3h11v18H14z" fill="#fff" stroke="#d85b3e"/><path d="M19 6h5v6h-5zM18 16h6" fill="#e88a70" stroke="#d85b3e"/><path d="M5 4l13-3v22L5 20z" fill="#fff" stroke="#d85b3e"/><path d="M10 17V6h3q2 3 0 5h-3" fill="none" stroke="#d85b3e" stroke-width="1.500"/><path d="M0 17h7v-3l5 6-5 5v-4H0z" fill="#d8492a"/></svg></a>
          </div>
          <div class="scrollbar" aria-hidden="true"><svg viewBox="0 0 14 16"><path d="M4 10l3-4 3 4" fill="none" stroke="#444" stroke-width="1.500"/></svg><i></i></div>
        </div>
      </section>
    </aside>
  </div>
  <p class="watermark"><span>hereitis.cn</span> 在这里资源站</p>
</main>
</body>
</html>
```
FILE: styles.css
```css
:root {
  --orange: #ffc998;
  --green: #9dd69d;
  --purple: #c0b2d6;
}
* { box-sizing: border-box; }
body {
  margin: 0;
  height: 100vh;
  padding: 4px 3px 2px;
  overflow: hidden;
  background: #f4f4f4;
  color: #111;
  font: 10px/14px "Open Sans", "Noto Sans CJK SC", sans-serif;
}
button {
  border: 0;
  padding: 0;
  background: none;
  color: inherit;
  font: inherit;
}
svg { display: block; }
h1, h2, p, ul { margin: 0; padding: 0; font: inherit; }
a { color: inherit; text-decoration: none; }
.sprite { position: absolute; width: 0; height: 0; }

.window {
  position: relative;
  height: 100%;
  display: flex;
  flex-direction: column;
  overflow: hidden;
  border: 1px solid #8a8a8a;
  border-bottom: 0;
  background: #e9eaf7;
}
.titlebar {
  flex: 0 0 27px;
  display: flex;
  align-items: center;
  padding-left: 6px;
  background: #fff;
}
.app-icon { width: 15px; height: 15px; margin-right: 2px; }
.title {
  flex: 1;
  font-size: 11px;
  line-height: 16px;
  white-space: nowrap;
}
.captions { display: flex; }
.captions button { width: 41px; display: grid; place-items: center; }
.captions svg { width: 12px; height: 12px; }

.menubar {
  flex: 0 0 19px;
  display: flex;
  align-items: center;
  gap: 8px;
  padding-left: 2px;
  background: #eff1fb;
  font-family: "Liberation Sans", "Noto Sans CJK SC", sans-serif;
  white-space: nowrap;
}
.grip {
  flex: none;
  width: 2px;
  height: 12px;
  margin-right: 4px;
  background: repeating-linear-gradient(#a9abc2 0 1px, transparent 1px 3px);
}
.menubar .grip { margin-right: -1px; }

.toolrow {
  flex: 0 0 20px;
  display: flex;
  gap: 2px;
  border-bottom: 1px solid #a3a5bc;
}
.toolrow + .toolrow { flex-basis: 21px; border-color: #8789a3; }
.strip {
  display: flex;
  align-items: center;
  padding-left: 2px;
  border-radius: 2px 3px 3px 2px;
  background: linear-gradient(#f8f8fe, #e4e5f2 50%, #bfc0d8);
}
.strip-main { flex: 0 0 567px; }
.strip-import { flex: 0 0 171px; }
.strip-clip { flex: 0 0 60px; }
.strip-font { flex: 0 0 389px; }
.strip-fill { flex: 1; }
.strip-mini { flex: 0 0 26px; }
.strip button { flex: 0 0 15px; height: 17px; display: grid; place-items: center; }
.strip button svg { width: 14px; height: 14px; }
.strip .drop { flex-basis: 8px; }
.strip .drop svg { width: 8px; }
.strip .overflow {
  flex-basis: 7px;
  align-self: stretch;
  height: auto;
  margin-left: auto;
  border-radius: 0 3px 3px 0;
  background: linear-gradient(#d5d6e6, #a9aac8);
}
.strip .overflow svg { width: 7px; height: 18px; }
.on, .strip .on { border: 1px solid #56aede; background: #c5e6f8; }
.sep {
  flex: none;
  width: 1px;
  height: 14px;
  margin: 0 3px;
  background: #c6c7d8;
}
.sep.blank { background: none; margin: 0 2px; }

.combo {
  position: relative;
  display: flex;
  align-items: center;
  height: 16px;
  background: #fff;
}
.combo select {
  appearance: none;
  width: 100%;
  height: 16px;
  padding: 0 12px 0 3px;
  border: 0;
  background: none;
  color: #222;
  font: 10px/14px "Open Sans", "Noto Sans CJK SC", sans-serif;
}
.combo-arrow { position: absolute; right: 1px; top: 1px; width: 8px; height: 14px; }
.zoom { flex: 0 0 49px; margin: 0 9px; }
.zoom select { border-right: 8px solid #d7d8e8; padding-right: 0; }
.font, .size { border: 1px solid #c3c4d2; background: #f6f6fa; }
.font select, .size select { color: #888; }
.font .combo-arrow, .size .combo-arrow { top: 0; opacity: .6; }
.font { flex: 0 0 111px; margin-right: 2px; }
.size { flex: 0 0 52px; margin-right: 3px; }
.tt { display: flex; align-items: baseline; padding-left: 4px; font: bold 8px/12px "Liberation Serif", serif; }
.tt b { font-size: 12px; }
.strip .glyph { color: #77777f; font: 12px/14px "Liberation Serif", serif; display: block; text-align: center; white-space: nowrap; }
.strip .bold { font-weight: bold; }
.strip .italic { font-style: italic; font-weight: bold; }
.strip .under { text-decoration: underline; font-weight: bold; }
.strip .big { font-size: 15px; }
.strip .colour { height: 14px; border-bottom: 3px solid #999; line-height: 12px; }
.glyph sup, .glyph sub { font-size: 6px; line-height: 6px; }

.body { flex: 1; min-height: 0; display: flex; }
.side-tabs { flex: 0 0 17px; display: flex; flex-direction: column; background: #e9eaf7; }
.side-tabs button {
  flex: 0 0 71px;
  width: 16px;
  padding-top: 11px;
  writing-mode: vertical-rl;
  text-orientation: sideways;
  text-align: start;
  border: 1px solid #d3d3dc;
  border-top: 0;
  border-left: 0;
  background: #f0f0f0;
  color: #777;
  font-size: 10px;
  line-height: 14px;
  white-space: nowrap;
}
.side-tabs .first { flex-basis: 97px; padding-top: 5px; }
.side-tabs .active { color: #111; background: #f4f4f6; }

.rail { display: flex; flex-direction: column; background: #e4e5f4; }
.rail-left { flex: 0 0 25px; }
.rail-right { flex: 0 0 20px; }
.rail-strip {
  display: flex;
  flex-direction: column;
  border-radius: 3px;
  background: linear-gradient(90deg, #f8f8fe, #e2e3f1 50%, #bdbfd8);
}
.rail-strip.rest { flex: 1; min-height: 0; overflow: hidden; }
.rail-grip {
  flex: none;
  width: 14px;
  height: 2px;
  margin: 1px 3px 3px;
  background: repeating-linear-gradient(90deg, #a9abc2 0 1px, transparent 1px 3px);
}
.rail-group { display: flex; flex-direction: column; justify-content: space-between; padding-left: 1px; }
.rail-right .rail-group { padding-left: 2px; }
.rail-group > div { display: flex; }
.rail-group button { width: 16px; height: 15px; display: grid; place-items: center; }
.rail-group button svg { width: 14px; height: 13px; }
.rail-group .drop { width: 8px; }
.rail-group .drop svg { width: 8px; }
.rail-group.all { height: 292px; }
.rail-group.two { height: 32px; margin-top: 2px; }
.rail-group.six { height: 92px; }
.rail-group.four { height: 61px; }
.rail-group.tail { height: 66px; margin-top: 1px; }
.rail-sep { flex: none; height: 1px; margin: 3px 2px 2px; background: #c1c2d2; }
.rail-more {
  height: 9px;
  display: flex;
  justify-content: flex-end;
  align-items: center;
  border-radius: 0 0 3px 3px;
  background: linear-gradient(90deg, #e0e1ee, #abadc8);
}
.rail-more svg { width: 8px; height: 8px; }

.workspace {
  position: relative;
  flex: 1;
  min-width: 0;
  border-left: 1px solid #8f8f96;
  background: #ababab;
}
.graph-window {
  position: absolute;
  left: 6px;
  top: 6px;
  width: 435px;
  height: 309px;
  display: flex;
  flex-direction: column;
  padding: 0 5px 5px 3px;
  border: 2px solid #9d2a92;
  border-radius: 5px 5px 0 0;
  background: linear-gradient(#9fbcdb, #bcd0ea 90px, #b9d2ea);
}
.graph-title { flex: 0 0 25px; display: flex; align-items: center; padding-top: 5px; }
.graph-icon { width: 14px; height: 14px; margin: 0 3px 0 1px; }
.graph-title h2 { flex: 1; font-size: 11px; line-height: 14px; }
.graph-buttons { display: flex; gap: 2px; }
.graph-buttons button {
  width: 29px;
  height: 17px;
  border: 1px solid #7489a5;
  background: linear-gradient(#c6d8ec, #9dbbdc 50%, #b8d2ea);
}
.graph-buttons svg { width: 27px; height: 15px; }
.graph-buttons .shut { background: linear-gradient(#dfa298, #c14835 50%, #cb5b45); border-color: #63302a; }
.graph-page {
  position: relative;
  flex: 1;
  min-height: 0;
  display: flex;
  border: 1px solid #70757c;
  border-width: 1px 0 0 1px;
  background: #c0c0c0;
}
.layer-tag {
  position: absolute;
  left: 0;
  top: 0;
  width: 18px;
  height: 18px;
  background: #c3c3c3;
  color: #000;
  font: bold 14px/18px "Liberation Sans", sans-serif;
}
.chart { flex: 0 0 85%; background: #fff; height: 100%; }
.chart path { fill: none; stroke: #111; }
.chart .b { fill: var(--orange); }
.chart .c { fill: var(--green); }
.chart .d { fill: var(--purple); }
.bars path { stroke: #333; }
.chart text { font: 9px "Liberation Serif", serif; fill: #111; }
.ticks text { text-anchor: end; }
.values text, .names text, .legend-text text { text-anchor: middle; }
.chart .values text { font-size: 8px; }
.chart .names text { font-size: 8px; font-weight: bold; }
.chart .ylabel { text-anchor: middle; }
.chart .legend-text text { font-size: 10px; }

.panels { flex: 0 0 184px; display: flex; flex-direction: column; padding: 0 2px; background: #dfe8f2; }
.panel header {
  flex: 0 0 19px;
  display: flex;
  align-items: center;
  padding: 0 1px 0 3px;
  background: linear-gradient(#dfe9f4, #bccde1);
}
.panel h2 { flex: 1; }
.panel header button { width: 12px; }
.panel header svg { width: 10px; height: 10px; margin: auto; }
.objects { flex: 0 0 164px; display: flex; flex-direction: column; }
.tree {
  flex: 1;
  padding: 1px;
  border: 1px solid #777b84;
  background: #fff;
  list-style: none;
  font-family: "Liberation Sans", "Noto Sans CJK SC", sans-serif;
}
.tree li { display: flex; align-items: center; height: 15px; }
.tree .selected { height: 16px; padding-left: 1px; background: #0078d7; color: #fff; outline: 1px dashed #b9dcf6; outline-offset: -1px; }
.tree .level-1 { padding-left: 12px; }
.tree .level-2 { height: 16px; padding-left: 23px; }
.tree .leaf { height: 16px; padding-left: 45px; }
.toggle { width: 9px; height: 9px; margin-right: 2px; }
.folder { width: 14px; height: 12px; margin-right: 3px; }
.tree label { display: flex; align-items: center; gap: 3px; }
.tree input {
  appearance: none;
  width: 12px;
  height: 12px;
  margin: 0;
  border: 1px solid #444;
  background: #fff;
  display: grid;
  place-items: center;
}
.tree input:checked::after {
  content: "";
  width: 7px;
  height: 4px;
  border: solid #333;
  border-width: 0 0 1px 1px;
  transform: rotate(-45deg);
}
.swatch { width: 30px; height: 11px; border: 1px solid #444; }
.orange { background: var(--orange); }
.green { background: var(--green); }
.purple { background: var(--purple); }

.apps { flex: 1; min-height: 0; display: flex; flex-direction: column; margin-top: 3px; }
.apps-body { flex: 1; min-height: 0; display: flex; background: #f0f0f0; }
.app-tabs { flex: 0 0 21px; display: flex; flex-direction: column; align-items: flex-end; overflow: hidden; border-right: 1px solid #888; }
.steppers { width: 20px; flex: 0 0 47px; display: flex; flex-direction: column; align-items: center; justify-content: space-between; padding-top: 2px; }
.steppers svg { width: 8px; height: 8px; }
.app-tab { position: relative; flex: 0 0 38px; width: 18px; }
.app-tab:last-child { flex-basis: 46px; margin-top: -6px; }
.app-tab svg { position: absolute; left: 0; top: 0; width: 18px; height: 100%; }
.app-tab span { position: relative; display: block; margin: auto; writing-mode: vertical-rl; text-orientation: sideways; white-space: nowrap; font-size: 11px; line-height: 14px; }
.current { font-weight: bold; }
.app-grid {
  flex: 1;
  display: grid;
  grid-template-columns: 1fr 1fr;
  grid-template-rows: 66px 68px 40px;
  padding: 2px 13px 0 0;
  overflow: hidden;
  border-top: 1px solid #888;
  background: #fff;
  text-align: center;
  font-size: 11px;
  line-height: 14px;
}
.app-grid a { display: flex; flex-direction: column; align-items: center; gap: 3px; padding: 0 8px; margin: 0 -4px; }
.app-grid svg { flex: none; width: 28px; height: 28px; }
.scrollbar { flex: 0 0 14px; background: #f0f0f0; }
.scrollbar svg { width: 14px; height: 16px; }
.scrollbar i { display: block; height: 87px; background: #cdcdcd; }

.watermark {
  position: absolute;
  right: 1px;
  bottom: 3px;
  color: #777;
  opacity: .8;
  font: 18px/24px "Liberation Mono", "Noto Sans CJK SC", monospace;
  white-space: nowrap;
}
.watermark span { font-size: 15px; }
```
